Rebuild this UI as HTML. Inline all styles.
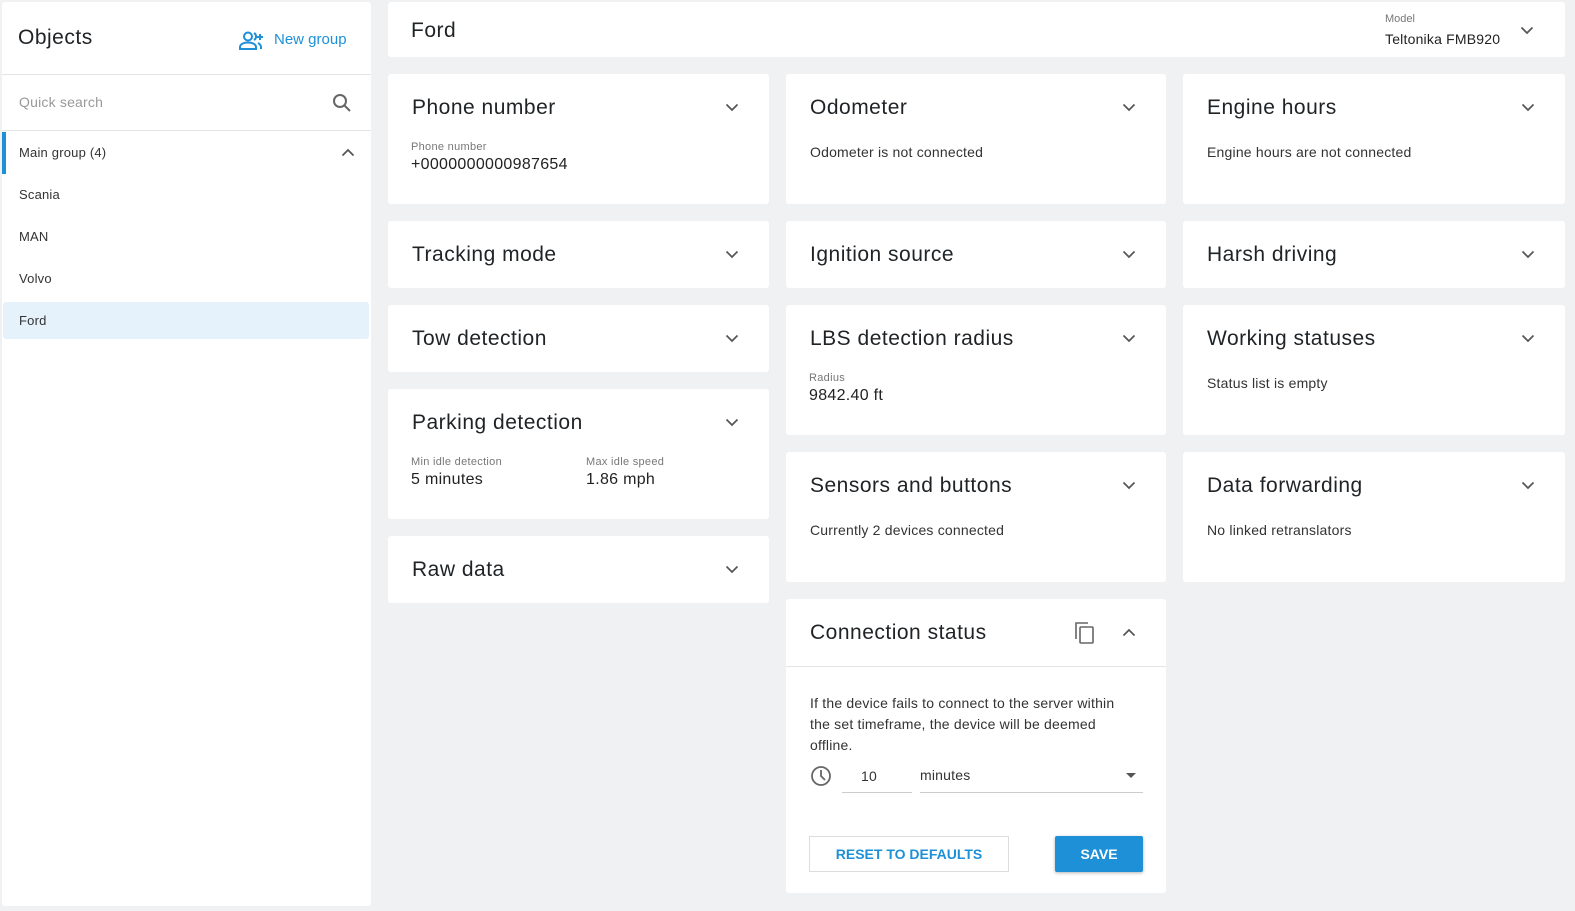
<!DOCTYPE html>
<html><head><meta charset="utf-8"><style>
*{box-sizing:border-box;margin:0;padding:0}
body{width:1575px;height:911px;background:#f0f1f3;font-family:"Liberation Sans",sans-serif;color:#222;position:relative;overflow:hidden}
.c{position:absolute;background:#fff;border-radius:3px}
.t{position:absolute;left:24px;top:22px;font-size:21px;color:#1f2326;letter-spacing:.5px}
.chev{position:absolute;right:30px;width:14px;height:9px}
.s{position:absolute;left:24px;font-size:14px;color:#333;letter-spacing:.2px}
.lbl{position:absolute;font-size:11px;color:#777;letter-spacing:.3px}
.val{position:absolute;font-size:16px;color:#222;letter-spacing:.3px}
.it{position:absolute;left:19px;font-size:13px;color:#333;letter-spacing:.2px}
</style></head><body>
<svg width="0" height="0" style="position:absolute"><defs><symbol id="cd" viewBox="0 0 14 9"><path d="M1.5 1.5L7 7l5.5-5.5" fill="none" stroke="#555" stroke-width="1.7"/></symbol></defs></svg>

<div class="c" style="left:2px;top:2px;width:369px;height:904px">
 <div style="position:absolute;left:16px;top:24px;font-size:21px;color:#1f2326;letter-spacing:.5px">Objects</div>
 <svg style="position:absolute;left:237px;top:29px" width="26" height="20" viewBox="0 0 26 20"><circle cx="9" cy="5.5" r="4" fill="none" stroke="#1e90d8" stroke-width="2"/><path d="M1 18v-2c0-3 4-4.5 8-4.5s8 1.5 8 4.5v2z" fill="none" stroke="#1e90d8" stroke-width="2"/><path d="M15 2a4 4 0 010 7M19 12c2 1 3 2 3 4v2" fill="none" stroke="#1e90d8" stroke-width="2"/><path d="M21 3v6M18 6h6" stroke="#1e90d8" stroke-width="2"/></svg>
 <div style="position:absolute;left:272px;top:29px;font-size:15px;color:#1e90d8">New group</div>
 <div style="position:absolute;left:0;top:72px;width:369px;border-top:1px solid #e3e4e6"></div>
 <div style="position:absolute;left:17px;top:92px;font-size:14px;color:#999;letter-spacing:.2px">Quick search</div>
 <svg style="position:absolute;left:330px;top:91px" width="20" height="20" viewBox="0 0 20 20"><circle cx="8" cy="8" r="6" fill="none" stroke="#666" stroke-width="2"/><path d="M12.5 12.5l5.5 5.5" stroke="#666" stroke-width="2"/></svg>
 <div style="position:absolute;left:0;top:128px;width:369px;border-top:1px solid #e3e4e6"></div>
 <div style="position:absolute;left:0;top:130px;width:4px;height:42px;background:#1e90d8"></div>
 <div class="it" style="left:17px;top:143px;color:#333">Main group (4)</div>
 <svg style="position:absolute;left:339px;top:146px" width="14" height="9"><use href="#cd" transform="rotate(180 7 4.5)"/></svg>
 <div class="it" style="left:17px;top:185px">Scania</div>
 <div class="it" style="left:17px;top:227px">MAN</div>
 <div class="it" style="left:17px;top:269px">Volvo</div>
 <div style="position:absolute;left:1px;top:300px;width:366px;height:37px;background:#e5f1fb;border-radius:3px"></div>
 <div class="it" style="left:17px;top:311px">Ford</div>
</div>

<div class="c" style="left:388px;top:2px;width:1177px;height:55px">
 <div style="position:absolute;left:23px;top:17px;font-size:21px;color:#1f2326;letter-spacing:.5px">Ford</div>
 <div style="position:absolute;left:997px;top:11px;font-size:11px;color:#777">Model</div>
 <div style="position:absolute;left:997px;top:29px;font-size:14px;color:#222;letter-spacing:.2px">Teltonika FMB920</div>
 <svg class="chev" style="top:24px;right:31px" width="14" height="9"><use href="#cd"/></svg>
</div>

<!-- col1 -->
<div class="c" style="left:388px;top:74px;width:381px;height:130px"><div class="t">Phone number</div><svg class="chev" style="top:29px"><use href="#cd"/></svg>
 <div class="lbl" style="left:23px;top:67px">Phone number</div><div class="val" style="left:23px;top:82px">+0000000000987654</div></div>
<div class="c" style="left:388px;top:221px;width:381px;height:67px"><div class="t">Tracking mode</div><svg class="chev" style="top:29px"><use href="#cd"/></svg></div>
<div class="c" style="left:388px;top:305px;width:381px;height:67px"><div class="t">Tow detection</div><svg class="chev" style="top:29px"><use href="#cd"/></svg></div>
<div class="c" style="left:388px;top:389px;width:381px;height:130px"><div class="t">Parking detection</div><svg class="chev" style="top:29px"><use href="#cd"/></svg>
 <div class="lbl" style="left:23px;top:67px">Min idle detection</div><div class="val" style="left:23px;top:82px">5 minutes</div>
 <div class="lbl" style="left:198px;top:67px">Max idle speed</div><div class="val" style="left:198px;top:82px">1.86 mph</div></div>
<div class="c" style="left:388px;top:536px;width:381px;height:67px"><div class="t">Raw data</div><svg class="chev" style="top:29px"><use href="#cd"/></svg></div>

<!-- col2 -->
<div class="c" style="left:786px;top:74px;width:380px;height:130px"><div class="t">Odometer</div><svg class="chev" style="top:29px"><use href="#cd"/></svg><div class="s" style="top:70px">Odometer is not connected</div></div>
<div class="c" style="left:786px;top:221px;width:380px;height:67px"><div class="t">Ignition source</div><svg class="chev" style="top:29px"><use href="#cd"/></svg></div>
<div class="c" style="left:786px;top:305px;width:380px;height:130px"><div class="t">LBS detection radius</div><svg class="chev" style="top:29px"><use href="#cd"/></svg>
 <div class="lbl" style="left:23px;top:67px">Radius</div><div class="val" style="left:23px;top:82px">9842.40 ft</div></div>
<div class="c" style="left:786px;top:452px;width:380px;height:130px"><div class="t">Sensors and buttons</div><svg class="chev" style="top:29px"><use href="#cd"/></svg><div class="s" style="top:70px">Currently 2 devices connected</div></div>
<div class="c" style="left:786px;top:599px;width:380px;height:294px"><div class="t">Connection status</div>
 <svg style="position:absolute;left:289px;top:23px" width="20" height="22" viewBox="0 0 20 22"><path d="M1 17V1h12" fill="none" stroke="#666" stroke-width="1.6"/><rect x="5" y="5" width="13" height="16" rx="1" fill="none" stroke="#666" stroke-width="1.6"/></svg>
 <svg class="chev" style="top:29px"><use href="#cd" transform="rotate(180 7 4.5)"/></svg>
 <div style="position:absolute;left:0;top:67px;width:380px;border-top:1px solid #e3e4e6"></div>
 <div class="s" style="top:94px;line-height:21px;width:318px">If the device fails to connect to the server within the set timeframe, the device will be deemed offline.</div>
 <svg style="position:absolute;left:24px;top:166px" width="22" height="22" viewBox="0 0 22 22"><circle cx="11" cy="11" r="9" fill="none" stroke="#666" stroke-width="1.8"/><path d="M11 5v6l4 4" fill="none" stroke="#666" stroke-width="1.8"/></svg>
 <div style="position:absolute;left:56px;top:193px;width:70px;border-top:1px solid #ccc"></div>
 <div class="s" style="left:75px;top:169px">10</div>
 <div style="position:absolute;left:134px;top:193px;width:223px;border-top:1px solid #ccc"></div>
 <div class="s" style="left:134px;top:168px">minutes</div>
 <div style="position:absolute;left:340px;top:174px;border:5px solid transparent;border-top:5px solid #555"></div>
 <div style="position:absolute;left:23px;top:237px;width:200px;height:36px;border:1px solid #ddd;color:#1e90d8;font-size:14px;font-weight:bold;text-align:center;line-height:34px">RESET TO DEFAULTS</div>
 <div style="position:absolute;left:269px;top:237px;width:88px;height:36px;background:#1e90d8;color:#fff;font-size:14px;font-weight:bold;text-align:center;line-height:36px;border-radius:2px;box-shadow:0 1px 3px rgba(0,0,0,.3)">SAVE</div>
</div>

<!-- col3 -->
<div class="c" style="left:1183px;top:74px;width:382px;height:130px"><div class="t">Engine hours</div><svg class="chev" style="top:29px"><use href="#cd"/></svg><div class="s" style="top:70px">Engine hours are not connected</div></div>
<div class="c" style="left:1183px;top:221px;width:382px;height:67px"><div class="t">Harsh driving</div><svg class="chev" style="top:29px"><use href="#cd"/></svg></div>
<div class="c" style="left:1183px;top:305px;width:382px;height:130px"><div class="t">Working statuses</div><svg class="chev" style="top:29px"><use href="#cd"/></svg><div class="s" style="top:70px">Status list is empty</div></div>
<div class="c" style="left:1183px;top:452px;width:382px;height:130px"><div class="t">Data forwarding</div><svg class="chev" style="top:29px"><use href="#cd"/></svg><div class="s" style="top:70px">No linked retranslators</div></div>
</body></html>
